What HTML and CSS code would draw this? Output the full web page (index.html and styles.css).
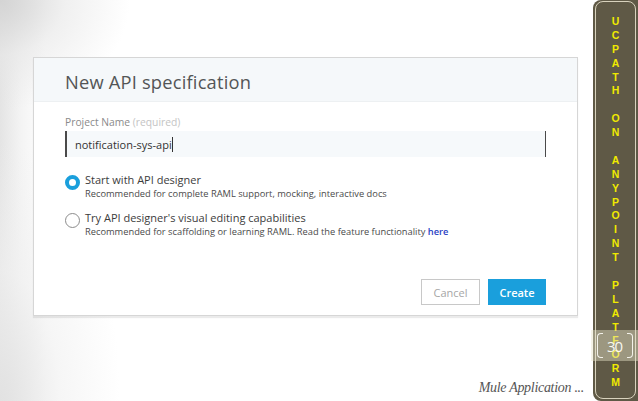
FILE: index.html
```html
<!DOCTYPE html>
<html>
<head>
<meta charset="utf-8">
<link rel="stylesheet" href="styles.css">
</head>
<body>
<div class="slide">
  <main class="stage">
    <section class="dialog">
      <header class="dlg-head"><h1 class="dlg-title">New API specification</h1></header>
      <div class="dlg-body">
        <div class="field-label">Project Name <span class="req">(required)</span></div>
        <div class="input"><span class="value">notification-sys-api</span></div>
        <div class="options">
          <div class="option">
            <span class="radio on"></span>
            <div class="opt-text">
              <div class="opt-title">Start with API designer</div>
              <div class="opt-sub">Recommended for complete RAML support, mocking, interactive docs</div>
            </div>
          </div>
          <div class="option">
            <span class="radio"></span>
            <div class="opt-text">
              <div class="opt-title">Try API designer's visual editing capabilities</div>
              <div class="opt-sub">Recommended for scaffolding or learning RAML. Read the feature functionality <a class="link">here</a></div>
            </div>
          </div>
        </div>
        <div class="actions">
          <button class="btn cancel">Cancel</button>
          <button class="btn create">Create</button>
        </div>
      </div>
    </section>
    <p class="footer">Mule Application ...</p>
  </main>
  <aside class="rail">
    <div class="rail-inner">
      <span>U</span><span>C</span><span>P</span><span>A</span><span>T</span><span>H</span><span></span>
      <span>O</span><span>N</span><span></span>
      <span>A</span><span>N</span><span>Y</span><span>P</span><span>O</span><span>I</span><span>N</span><span>T</span><span></span>
      <span>P</span><span>L</span><span>A</span><span>T</span><span>F</span><span>O</span><span>R</span><span>M</span>
    </div>
    <div class="pagenum"><span class="num">30</span></div>
  </aside>
</div>
</body>
</html>
```
FILE: styles.css
```css
html, body {
  margin: 0;
  padding: 0;
}
body {
  width: 638px;
  height: 401px;
  overflow: hidden;
  font-family: "Open Sans", "Noto Sans", sans-serif;
}
.slide {
  width: 638px;
  height: 401px;
  display: flex;
  background:
    radial-gradient(ellipse 130px 110px at 0 0, #d4d4d4 0%, rgba(230,230,230,0.6) 50%, rgba(255,255,255,0) 100%),
    radial-gradient(ellipse 120px 260px at 0 100%, #e2e2e2 0%, rgba(240,240,240,0.6) 50%, rgba(255,255,255,0) 100%),
    linear-gradient(to right, #e4e4e4 0, #f3f3f3 20px, #ffffff 45px);
}
.stage {
  width: 593px;
  box-sizing: border-box;
  padding: 57px 0 0 33px;
  display: flex;
  flex-direction: column;
}
.dialog {
  box-sizing: border-box;
  width: 545px;
  height: 259px;
  background: #fff;
  border: 1px solid #d6d6d6;
  box-shadow: 0 2px 1px rgba(0,0,0,0.08);
  display: flex;
  flex-direction: column;
}
.dlg-head {
  height: 44px;
  background: #f5f8fa;
  border-bottom: 1px solid #edf0f2;
  display: flex;
  align-items: center;
  padding: 4px 0 0 31px;
  box-sizing: border-box;
}
.dlg-title {
  margin: 0;
  font-size: 18.3px;
  font-weight: 400;
  color: #535556;
  letter-spacing: 0.2px;
}
.dlg-body {
  flex: 1;
  display: flex;
  flex-direction: column;
  padding: 13px 31px 10px 31px;
}
.field-label {
  font-size: 10.3px;
  color: #8a8a8a;
  line-height: 14px;
}
.req {
  color: #c4c4c4;
}
.input {
  margin-top: 2px;
  height: 26px;
  box-sizing: border-box;
  background: #f6f9fb;
  border-left: 2px solid #4a4a4a;
  border-right: 1.5px solid #4a4a4a;
  padding-left: 8px;
  display: flex;
  align-items: center;
}
.value {
  font-size: 11px;
  color: #333;
  border-right: 1px solid #333;
  line-height: 15px;
}
.options {
  margin-top: 16px;
  display: flex;
  flex-direction: column;
  gap: 11px;
}
.option {
  display: flex;
  align-items: flex-start;
  gap: 5px;
}
.radio {
  width: 15px;
  height: 15px;
  box-sizing: border-box;
  border-radius: 50%;
  border: 1px solid #8c8c8c;
  background: #fff;
  margin-top: 1.5px;
  flex: none;
}
.radio.on {
  border: 4.5px solid #1a9fdc;
}
.opt-title {
  font-size: 11px;
  color: #3c3c3c;
  line-height: 14px;
}
.opt-sub {
  font-size: 9.3px;
  color: #4a4a4a;
  line-height: 13px;
}
.link {
  color: #2a3fc4;
  font-weight: 600;
}
.actions {
  margin-top: auto;
  display: flex;
  justify-content: flex-end;
  gap: 8px;
}
.btn {
  height: 26px;
  width: 59px;
  font-family: "Open Sans", "Noto Sans", sans-serif;
  font-size: 11px;
  padding: 0;
  border-radius: 0;
  cursor: pointer;
}
.btn.cancel {
  background: #fff;
  border: 1px solid #c8c8c8;
  color: #a6a6a6;
}
.btn.create {
  background: #1a9fdc;
  border: 1px solid #1a9fdc;
  color: #fff;
  font-weight: 600;
  width: 58px;
}
.footer {
  margin: auto 9px 5px 0;
  align-self: flex-end;
  font-family: "Liberation Serif", serif;
  font-style: italic;
  font-size: 14px;
  color: #555;
  letter-spacing: -0.3px;
}
.rail {
  position: relative;
  width: 45px;
  background: #5f5946;
  border-radius: 8px 0 0 8px;
}
.rail-inner {
  position: absolute;
  inset: 1px 2px 2px 2px;
  border: 1px solid #d8d2bd;
  border-radius: 8px;
  display: flex;
  flex-direction: column;
  align-items: center;
  padding-top: 13px;
}
.rail-inner span {
  display: block;
  height: 13.9px;
  line-height: 13.9px;
  font-family: "Liberation Sans", sans-serif;
  font-weight: 700;
  font-size: 10.5px;
  color: #f0ea00;
}
.pagenum {
  position: absolute;
  left: -2px;
  right: 0;
  top: 330px;
  height: 31px;
  background: rgba(230,226,200,0.45);
  display: flex;
  align-items: center;
  justify-content: center;
}
.pagenum::before,
.pagenum::after {
  content: "";
  position: absolute;
  top: 3px;
  bottom: 3px;
  width: 5px;
  border: 1.5px solid #f4f2ea;
}
.pagenum::before {
  left: 6px;
  border-right: none;
  border-radius: 4px 0 0 4px;
}
.pagenum::after {
  right: 5px;
  border-left: none;
  border-radius: 0 4px 4px 0;
}
.num {
  font-family: "Open Sans", sans-serif;
  font-size: 15px;
  color: #f8f8f0;
  letter-spacing: -1px;
}
```
